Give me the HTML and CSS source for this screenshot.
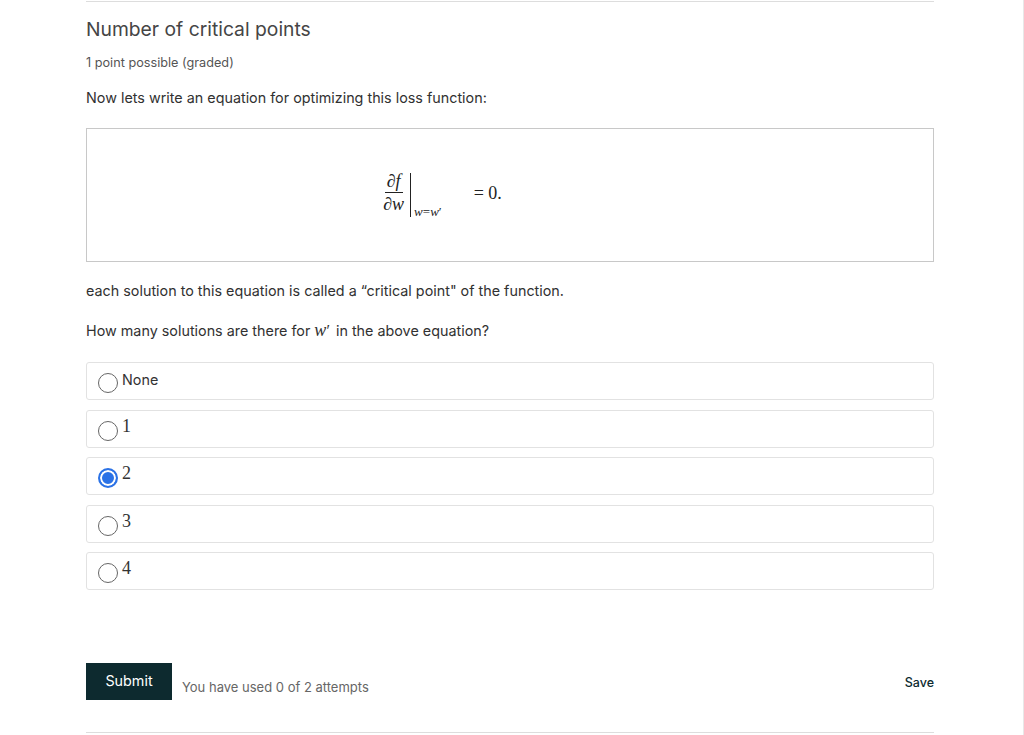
FILE: index.html
```html
<!DOCTYPE html>
<html>
<head>
<meta charset="utf-8">
<link rel="stylesheet" href="styles.css">
</head>
<body>
<div class="page">
  <div class="problem">
    <h3 class="title">Number of critical points</h3>
    <div class="points">1 point possible (graded)</div>
    <p class="text intro">Now lets write an equation for optimizing this loss function:</p>
    <div class="eqbox">
      <div class="eq">
        <span class="frac">
          <span class="num"><i>∂f</i></span>
          <span class="den"><i>∂w</i></span>
        </span>
        <span class="evalbar"></span>
        <span class="sub"><i>w</i>=<i>w</i>′</span>
        <span class="rhs">= 0.</span>
      </div>
    </div>
    <p class="text sol">each solution to this equation is called a “critical point" of the function.</p>
    <p class="text how">How many solutions are there for <i class="mi">w</i><span class="prime">′</span> in the above equation?</p>
    <div class="options">
      <label class="opt"><span class="radio"></span><span class="lbl">None</span></label>
      <label class="opt"><span class="radio"></span><span class="lbl math">1</span></label>
      <label class="opt"><span class="radio checked"></span><span class="lbl math">2</span></label>
      <label class="opt"><span class="radio"></span><span class="lbl math">3</span></label>
      <label class="opt"><span class="radio"></span><span class="lbl math">4</span></label>
    </div>
    <div class="actions">
      <button class="submit">Submit</button>
      <span class="attempts">You have used 0 of 2 attempts</span>
      <span class="save">Save</span>
    </div>
  </div>
</div>
</body>
</html>
```

FILE: styles.css
```css
html, body {
  margin: 0;
  padding: 0;
  background: #fff;
}
body {
  font-family: Inter, "Noto Sans", sans-serif;
  color: #333;
  width: 1023px;
  height: 735px;
  border-right: 1px solid #e8e8e8;
  overflow: hidden;
}
.page {
  padding: 1px 89px 0 86px;
}
.problem {
  border-top: 1px solid #ddd;
  border-bottom: 1px solid #ddd;
  height: 732px;
  box-sizing: border-box;
}
.title {
  margin: 15px 0 0;
  font-size: 19.3px;
  font-weight: 400;
  color: #454545;
  line-height: 24px;
}
.points {
  margin-top: 14px;
  font-size: 12.7px;
  color: #555;
  line-height: 16px;
}
.text {
  margin: 0;
  font-size: 14.35px;
  line-height: 20px;
  color: #313131;
}
.intro { margin-top: 17px; }
.eqbox {
  margin-top: 20px;
  height: 134px;
  box-sizing: border-box;
  border: 1px solid #c8c8c8;
  display: flex;
  align-items: center;
  justify-content: center;
}
.eq {
  display: flex;
  align-items: center;
  font-family: "Liberation Serif", "DejaVu Serif", serif;
  font-size: 18px;
  color: #222;
  margin-right: 138px;
  margin-top: -4px;
}
.eq i { font-style: italic; }
.frac {
  display: inline-flex;
  flex-direction: column;
  align-items: center;
  padding: 0 1px;
}
.num, .den { line-height: 19px; padding: 0 2px; }
.num { border-bottom: 1px solid #222; padding-bottom: 1px; }
.den { padding-top: 2px; }
.evalbar {
  width: 1px;
  height: 44px;
  background: #222;
  margin-left: 3px;
  margin-top: 4px;
}
.sub {
  font-size: 13px;
  align-self: flex-end;
  margin-bottom: -3px;
  margin-left: 3px;
}
.rhs { margin-left: 32px; margin-top: 0; }
.sol { margin-top: 19px; }
.how { margin-top: 19px; }
.mi {
  font-family: "Liberation Serif", "DejaVu Serif", serif;
  font-style: italic;
  font-size: 18px;
}
.prime { font-family: "Liberation Serif", serif; font-size: 16px; margin-right: 2px; }
.options {
  margin-top: 21px;
  display: flex;
  flex-direction: column;
  gap: 9.5px;
}
.opt {
  display: flex;
  align-items: center;
  height: 38px;
  box-sizing: border-box;
  border: 1px solid #e2e2e2;
  border-radius: 3px;
  padding-left: 11px;
}
.radio {
  width: 20px;
  height: 20px;
  border: 1px solid #666;
  border-radius: 50%;
  box-sizing: border-box;
  margin-top: 4px;
  flex: none;
}
.radio.checked {
  border: 2px solid #2b72e6;
  background: #2b72e6;
  box-shadow: inset 0 0 0 2px #fff;
}
.lbl {
  font-size: 14.35px;
  color: #333;
  margin-left: 4px;
  margin-top: -3px;
}
.lbl.math {
  font-family: "Liberation Serif", serif;
  font-size: 18px;
  margin-left: 4px;
  margin-top: -5px;
}
.actions {
  margin-top: 73px;
  display: flex;
  align-items: center;
}
.submit {
  width: 86px;
  height: 37px;
  background: #0d2a2f;
  color: #fff;
  border: 0;
  border-radius: 0;
  font-family: Inter, sans-serif;
  font-size: 14.35px;
  padding: 0 0 2px;
}
.attempts {
  margin-left: 10px;
  margin-top: 10px;
  font-size: 13px;
  color: #666;
}
.save {
  margin-left: auto;
  margin-top: 2px;
  font-size: 12.5px;
  font-weight: 500;
  color: #0d2a2f;
}
```
